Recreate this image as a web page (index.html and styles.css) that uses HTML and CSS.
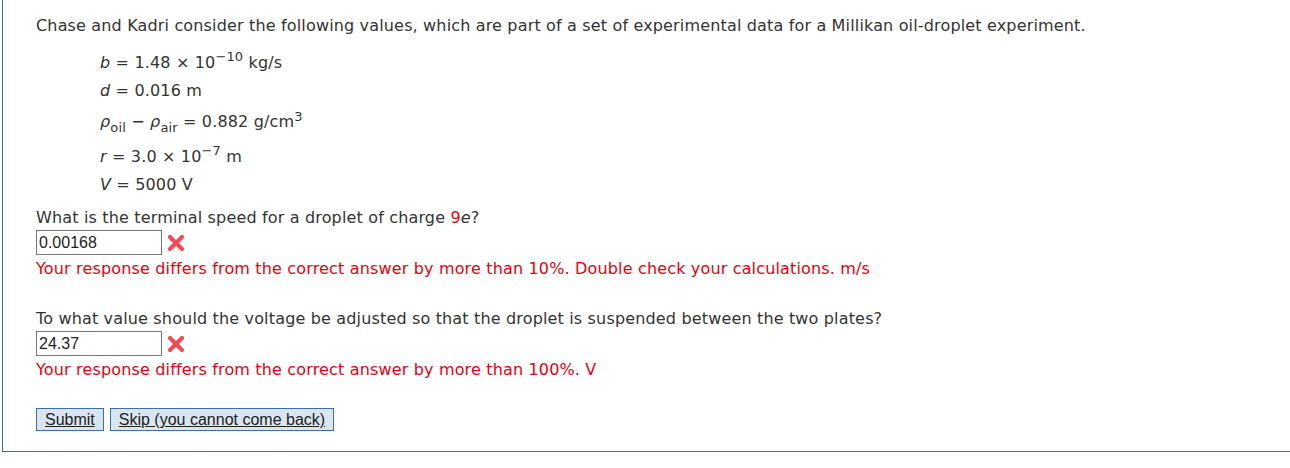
FILE: index.html
```html
<!DOCTYPE html>
<html>
<head>
<meta charset="utf-8">
<link rel="stylesheet" href="styles.css">
</head>
<body>
<div class="panel">
  <p class="intro">Chase and Kadri consider the following values, which are part of a set of experimental data for a Millikan oil-droplet experiment.</p>
  <div class="values">
    <div class="row row-b"><i>b</i> = 1.48 × 10<sup>−10</sup> kg/s</div>
    <div class="row row-d"><i>d</i> = 0.016 m</div>
    <div class="row row-rho"><i>ρ</i><sub>oil</sub> − <i>ρ</i><sub>air</sub> = 0.882 g/cm<sup class="small">3</sup></div>
    <div class="row row-r"><i>r</i> = 3.0 × 10<sup>−7</sup> m</div>
    <div class="row row-v"><i>V</i> = 5000 V</div>
  </div>
  <p class="question q1">What is the terminal speed for a droplet of charge <span class="red">9</span><i>e</i>?</p>
  <div class="answer">
    <input class="field" type="text" value="0.00168">
    <svg class="wrong" width="18" height="18" viewBox="0 0 18 18"><path d="M3 3 L15 15 M15 3 L3 15" stroke="#ee4b55" stroke-width="4.2" stroke-linecap="round"/></svg>
  </div>
  <p class="feedback">Your response differs from the correct answer by more than 10%. Double check your calculations. m/s</p>
  <p class="question q2">To what value should the voltage be adjusted so that the droplet is suspended between the two plates?</p>
  <div class="answer">
    <input class="field" type="text" value="24.37">
    <svg class="wrong" width="18" height="18" viewBox="0 0 18 18"><path d="M3 3 L15 15 M15 3 L3 15" stroke="#ee4b55" stroke-width="4.2" stroke-linecap="round"/></svg>
  </div>
  <p class="feedback">Your response differs from the correct answer by more than 100%. V</p>
  <div class="buttons">
    <button class="btn">Submit</button>
    <button class="btn">Skip (you cannot come back)</button>
  </div>
</div>
</body>
</html>
```
FILE: styles.css
```css
html, body { margin: 0; padding: 0; background: #fff; }
body {
  font-family: "DejaVu Sans", Verdana, sans-serif;
  font-size: 16px;
  letter-spacing: 0.16px;
  color: #333;
}
.panel {
  margin-left: 2px;
  height: 452px;
  box-sizing: border-box;
  border-left: 1px solid #3a6ea5;
  border-bottom: 1px solid #3a6ea5;
  padding: 16px 0 0 33px;
}
p { margin: 0; }
.intro { line-height: 20px; }
.values { padding-left: 64px; margin-top: 17px; }
.row { line-height: 20px; }
.row-d { margin-top: 8px; }
.row-rho { margin-top: 11px; }
.row-r { margin-top: 15px; }
.row-v { margin-top: 8px; }
sup { font-size: 13px; line-height: 0; vertical-align: 7px; }
sup.small { vertical-align: 6px; }
sub { font-size: 13px; line-height: 0; vertical-align: -5px; }
i { font-style: italic; }
.red { color: #e8000e; }
.question { line-height: 20px; }
.q1 { margin-top: 13px; }
.q2 { margin-top: 30px; }
.answer { display: flex; align-items: center; gap: 5px; margin-top: 2px; }
.field {
  width: 126px;
  height: 25px;
  box-sizing: border-box;
  border: 1px solid #767676;
  border-radius: 0;
  padding: 1px 2px;
  font-family: "Liberation Sans", Arial, sans-serif;
  font-size: 16px;
  letter-spacing: 0;
  color: #222;
  margin: 0;
}
.wrong { display: block; }
.feedback { color: #e8000e; line-height: 20px; margin-top: 4px; }
.buttons { display: flex; gap: 6px; margin-top: 28px; }
.btn {
  margin: 0;
  height: 23px;
  padding: 0 8px;
  background: #d9e5f1;
  border: 1px solid #3a6ea5;
  border-radius: 0;
  font-family: "Liberation Sans", Arial, sans-serif;
  font-size: 16px;
  letter-spacing: 0;
  color: #222;
  text-decoration: underline;
  line-height: 21px;
}
```
